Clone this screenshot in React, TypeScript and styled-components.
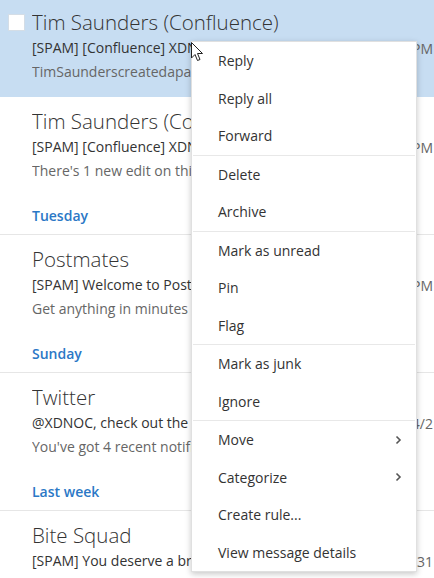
import React from "react";
import styled, { createGlobalStyle } from "styled-components";

const Global = createGlobalStyle`
  html, body { margin: 0; padding: 0; background: #fff; }
  body { width: 434px; height: 578px; overflow: hidden; font-family: "Open Sans", "Noto Sans", sans-serif; }
  #root { position: relative; width: 434px; height: 578px; overflow: hidden; }
`;

const List = styled.div`
  display: flex;
  flex-direction: column;
  margin-top: -2px;
  width: 434px;
`;

const Message = styled.div<{ $selected?: boolean }>`
  position: relative;
  height: 99px;
  box-sizing: border-box;
  padding: 10px 1px 0 32px;
  background: ${(p) => (p.$selected ? "#c7ddf2" : "#fff")};
  display: flex;
  flex-direction: column;
`;

const Check = styled.div`
  position: absolute;
  left: 8px;
  top: 16px;
  width: 15px;
  height: 15px;
  background: #fff;
  border: 1px solid #d4dde6;
`;

const Name = styled.div`
  font-size: 20.5px;
  font-weight: 300;
  line-height: 28px;
  color: #333;
  white-space: nowrap;
  overflow: hidden;
`;

const SubjectRow = styled.div`
  display: flex;
  align-items: center;
  height: 24px;
  gap: 8px;
`;

const Subject = styled.div`
  flex: 1;
  font-size: 14px;
  line-height: 24px;
  color: #333;
  white-space: nowrap;
  overflow: hidden;
`;

const DateText = styled.div`
  font-size: 14px;
  color: #666;
  white-space: nowrap;
`;

const Preview = styled.div`
  font-size: 14px;
  line-height: 24px;
  color: #666;
  white-space: nowrap;
  overflow: hidden;
`;

const Header = styled.div`
  height: 39px;
  box-sizing: border-box;
  padding: 8px 0 0 32px;
  border-bottom: 1px solid #e6e6e6;
  font-size: 14px;
  font-weight: 600;
  line-height: 24px;
  color: #2b78c6;
`;

const Menu = styled.div`
  position: absolute;
  left: 191px;
  top: 41px;
  width: 226px;
  height: 531px;
  box-sizing: border-box;
  background: #fff;
  border: 1px solid #e0e0e0;
  box-shadow: 0 2px 6px rgba(0, 0, 0, 0.22);
  display: flex;
  flex-direction: column;
`;

const Item = styled.div`
  height: 37.5px;
  flex: none;
  display: flex;
  align-items: center;
  justify-content: space-between;
  padding: 0 14px 0 26px;
  font-size: 14px;
  color: #333;
  white-space: nowrap;
`;

const Sep = styled.div`
  height: 1px;
  flex: none;
  background: #e8e8e8;
  margin: 0 1px;
`;

const Cursor = styled.svg`
  position: absolute;
  left: 191px;
  top: 42px;
`;

const Chevron = () => (
  <svg width="7" height="10" viewBox="0 0 7 10">
    <path d="M1.5 1.5 L5 5 L1.5 8.5" fill="none" stroke="#555" strokeWidth="1.6" />
  </svg>
);

type Msg = { name: string; subject: string; preview: string; date: string; selected?: boolean };
type Entry = { header?: string; msg: Msg };

const entries: Entry[] = [
  {
    msg: {
      name: "Tim Saunders (Confluence)",
      subject: "[SPAM] [Confluence] XDNOC > Home",
      preview: "TimSaunderscreatedapageinXDNOC",
      date: "3:41 PM",
      selected: true,
    },
  },
  {
    msg: {
      name: "Tim Saunders (Confluence)",
      subject: "[SPAM] [Confluence] XDNOC > Notes",
      preview: "There's 1 new edit on this page",
      date: "3:05 PM",
    },
  },
  {
    header: "Tuesday",
    msg: {
      name: "Postmates",
      subject: "[SPAM] Welcome to Postmates!",
      preview: "Get anything in minutes",
      date: "Tue 4:12 PM",
    },
  },
  {
    header: "Sunday",
    msg: {
      name: "Twitter",
      subject: "@XDNOC, check out the latest",
      preview: "You've got 4 recent notifications",
      date: "Sun 4/2",
    },
  },
  {
    header: "Last week",
    msg: {
      name: "Bite Squad",
      subject: "[SPAM] You deserve a break",
      preview: "Order now and save",
      date: "3/31",
    },
  },
];

const groups: { label: string; sub?: boolean }[][] = [
  [{ label: "Reply" }, { label: "Reply all" }, { label: "Forward" }],
  [{ label: "Delete" }, { label: "Archive" }],
  [{ label: "Mark as unread" }, { label: "Pin" }, { label: "Flag" }],
  [{ label: "Mark as junk" }, { label: "Ignore" }],
  [
    { label: "Move", sub: true },
    { label: "Categorize", sub: true },
    { label: "Create rule..." },
    { label: "View message details" },
  ],
];

export default function App() {
  return (
    <>
      <Global />
      <List>
        {entries.map((e, i) => (
          <React.Fragment key={i}>
            {e.header && <Header>{e.header}</Header>}
            <Message $selected={e.msg.selected}>
              {e.msg.selected && <Check />}
              <Name>{e.msg.name}</Name>
              <SubjectRow>
                <Subject>{e.msg.subject}</Subject>
                <DateText>{e.msg.date}</DateText>
              </SubjectRow>
              <Preview>{e.msg.preview}</Preview>
            </Message>
          </React.Fragment>
        ))}
      </List>
      <Menu>
        {groups.map((g, gi) => (
          <React.Fragment key={gi}>
            {gi > 0 && <Sep />}
            {g.map((it) => (
              <Item key={it.label}>
                <span>{it.label}</span>
                {it.sub && <Chevron />}
              </Item>
            ))}
          </React.Fragment>
        ))}
      </Menu>
      <Cursor width="13" height="20" viewBox="0 0 13 20">
        <path
          d="M0.5 0.5 L0.5 16 L4 12.5 L6.5 18.5 L9 17.5 L6.5 11.5 L11.5 11.5 Z"
          fill="#fff"
          stroke="#222"
          strokeWidth="1"
          strokeLinejoin="round"
        />
      </Cursor>
    </>
  );
}
